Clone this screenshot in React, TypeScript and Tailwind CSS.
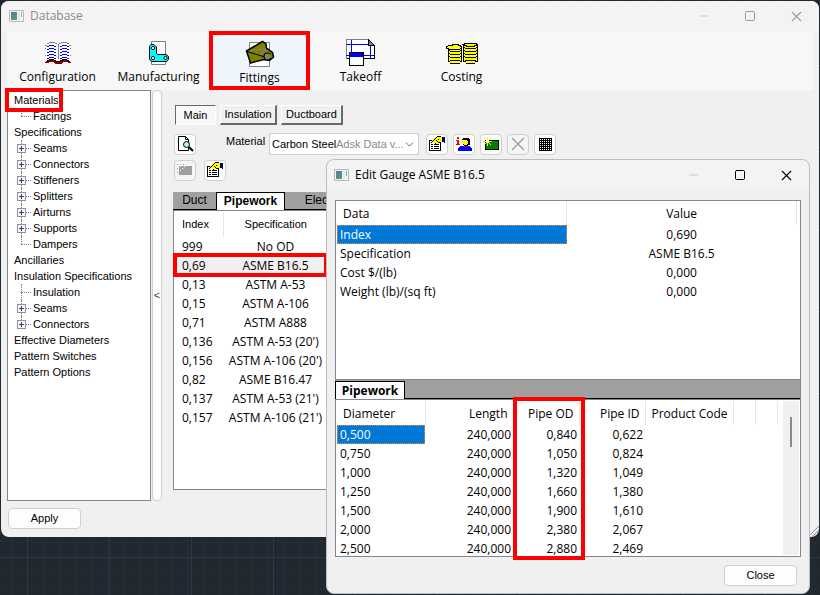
import React from 'react';
import { ChevronDown, Minus, Square, X } from 'lucide-react';

type TreeNode = {
  name: string;
  children?: { name: string; expandable?: boolean }[];
};

const tree: TreeNode[] = [
  { name: 'Materials', children: [{ name: 'Facings' }] },
  {
    name: 'Specifications',
    children: [
      { name: 'Seams', expandable: true },
      { name: 'Connectors', expandable: true },
      { name: 'Stiffeners', expandable: true },
      { name: 'Splitters', expandable: true },
      { name: 'Airturns', expandable: true },
      { name: 'Supports', expandable: true },
      { name: 'Dampers' },
    ],
  },
  { name: 'Ancillaries' },
  {
    name: 'Insulation Specifications',
    children: [
      { name: 'Insulation' },
      { name: 'Seams', expandable: true },
      { name: 'Connectors', expandable: true },
    ],
  },
  { name: 'Effective Diameters' },
  { name: 'Pattern Switches' },
  { name: 'Pattern Options' },
];

const specs = [
  ['999', 'No OD'],
  ['0,69', 'ASME B16.5'],
  ['0,13', 'ASTM A-53'],
  ['0,15', 'ASTM A-106'],
  ['0,71', 'ASTM A888'],
  ['0,136', "ASTM A-53 (20')"],
  ['0,156', "ASTM A-106 (20')"],
  ['0,82', 'ASME B16.47'],
  ['0,137', "ASTM A-53 (21')"],
  ['0,157', "ASTM A-106 (21')"],
];

const gauge = [
  ['Index', '0,690'],
  ['Specification', 'ASME B16.5'],
  ['Cost $/(lb)', '0,000'],
  ['Weight (lb)/(sq ft)', '0,000'],
];

const pipes = [
  ['0,500', '240,000', '0,840', '0,622'],
  ['0,750', '240,000', '1,050', '0,824'],
  ['1,000', '240,000', '1,320', '1,049'],
  ['1,250', '240,000', '1,660', '1,380'],
  ['1,500', '240,000', '1,900', '1,610'],
  ['2,000', '240,000', '2,380', '2,067'],
  ['2,500', '240,000', '2,880', '2,469'],
];

const BookIcon = () => (
  <svg width="26" height="24" viewBox="0 0 26 24" fill="none" shapeRendering="crispEdges" aria-hidden="true">
    <path d="M1 3h11l1 1 1-1h11v16l-8-1-4 2-4-2-8 1z" fill="#fff" />
    <path d="M13 3v15" stroke="#808080" strokeWidth="1" />
    <path d="M0 4.500h2M2 2.500h2M4 1.500h6M10 2.500h2M14 2.500h2M16 1.500h6M22 2.500h2M24 4.500h2M.500 7v1M25.500 7v1M.500 14v1M25.500 14v1" stroke="#808080" />
    {[5, 8, 11, 14, 17].map((y) => (
      <g key={y} fill="#0000ff">
        <path d={`M2 ${y}h2v1H2zM4 ${y - 1}h5v1H4zM9 ${y}h2v1H9z`} />
        <path d={`M15 ${y}h2v1h-2zM17 ${y - 1}h5v1h-5zM22 ${y}h2v1h-2z`} />
      </g>
    ))}
    <path d="M0 22v-1l3-2h6l4 2 4-2h6l3 2v1h-3l-1-1h-4l-2 2h-6l-2-2H4l-1 1z" fill="#800000" />
    <path d="M2 19.500h2M4 18.500h5M9 19.500h2M11 20.500h4M15 19.500h2M17 18.500h5M22 19.500h2" stroke="#000" />
  </svg>
);

const BracketIcon = () => (
  <svg width="22" height="26" viewBox="0 0 22 26" fill="none" aria-hidden="true">
    <path d="M3.500 1.500h14v23h-14z" fill="#fff" stroke="#808080" />
    <path d="M3 4.500h3l2.500 2.500v6.500l1.500 1h8l2.500 2v3l-2 2H4l-2.500-2V6.500z" fill="#00ffff" stroke="#000" />
    <circle cx="5" cy="8" r="1.600" fill="#fff" stroke="#000" />
    <circle cx="5" cy="18" r="1.600" fill="#fff" stroke="#000" />
    <circle cx="17.500" cy="18" r="1.600" fill="#fff" stroke="#000" />
  </svg>
);

const FittingIcon = () => (
  <svg width="30" height="28" viewBox="0 0 30 28" fill="none" aria-hidden="true">
    <path d="M4.500 2.500h20v24h-20z" fill="#fff" stroke="#808080" />
    <path d="M1.500 11L17.500 1.500l3.500 2.500 .500 4 6 4.500 1 4.500-4 3.500-5.500-1-13.500 3.500-2-6z" fill="#808000" stroke="#000" strokeWidth="1.500" />
    <path d="M4 10.500l13-1 4-1.500" stroke="#808080" />
    <path d="M15.500 14.500l5.500-5" stroke="#808080" strokeWidth="1.500" />
    <path d="M2 11.500l13 4 5 1.500" stroke="#000" />
    <circle cx="22.500" cy="16.500" r="3.500" fill="#808080" stroke="#000" strokeWidth="1.200" />
    <path d="M24 13.500l3 1.500v2.500l-2 1z" fill="#808000" />
  </svg>
);

const TakeoffIcon = () => (
  <svg width="30" height="28" viewBox="0 0 30 28" fill="none" shapeRendering="crispEdges" aria-hidden="true">
    <path d="M.500.500h22l6 6v13H.500z" fill="#fff" stroke="#808080" />
    <path d="M.500 19.500h28V6.500" stroke="#000" />
    <path d="M0 5.500h23M5.500 1v18M24.500 7v12M0 16.500h28" stroke="#0000ff" />
    <path d="M22.500.500v6h6z" fill="#808080" stroke="#000" />
    <path d="M3.500 13.500h14v13h-14z" fill="#fff" stroke="#000" />
    <path d="M4 14h13v4H4z" fill="#0000ff" />
  </svg>
);

const CoinsIcon = () => (
  <svg width="32" height="22" viewBox="0 0 32 22" fill="none" shapeRendering="crispEdges" aria-hidden="true">
    <path d="M2 6h13v13l-2 2H4l-2-2z" fill="#ffff00" />
    <path d="M17 3h14v16l-3 2h-8l-3-2z" fill="#ffff00" />
    <path d="M2.500 7v12M15.500 6v13M17.500 3v16M31.500 3v16M4 21.500h10M20 21.500h9" stroke="#000" />
    <path
      d="M2 19.500h2M14 19.500h2M17 19.500h3M29 19.500h3M4 9.500h10M4 12.500h10M4 15.500h10M4 18.500h10M19 6.500h11M19 9.500h11M19 12.500h11M19 15.500h11M19 18.500h11"
      stroke="#000"
    />
    <path d="M3 8.500h1M14 8.500h1M3 11.500h1M14 11.500h1M3 14.500h1M14 14.500h1M18 5.500h1M30 5.500h1M18 8.500h1M30 8.500h1M18 11.500h1M30 11.500h1M18 14.500h1M30 14.500h1" stroke="#000" />
    <path d="M.500 5l2-1.500h3l2-1h4l4 2v2l-3 1h-8l-4-1z" fill="#ffff00" stroke="#000" />
    <path d="M17.500 2.500l3-1.500h8l3 1.500-3 1.500h-8z" fill="#ffff00" stroke="#000" />
  </svg>
);

const AppIcon = () => (
  <svg width="15" height="12" viewBox="0 0 15 12" aria-hidden="true" className="shrink-0">
    <defs>
      <linearGradient id="app" x1="0" y1="0" x2="0.300" y2="1">
        <stop offset="0" stopColor="#4a7d9c" />
        <stop offset="1" stopColor="#5c9a72" />
      </linearGradient>
    </defs>
    <path d="M.500.500h14v11H.500z" fill="#f2f5f7" stroke="#b4b9be" />
    <path d="M2 2h6v8H2z" fill="url(#app)" />
    <path d="M9 2h2v8H9z" fill="#dfe5e8" />
    <path d="M12 2h1v5h-1z" fill="#8fb3a8" />
  </svg>
);

const PreviewIcon = () => (
  <svg width="18" height="16" viewBox="0 0 18 16" fill="none" className="shrink-0" aria-hidden="true">
    <path d="M2.500.500h7l3 3v11h-10z" fill="#fff" stroke="#000" />
    <path d="M9.500.500v3h3" stroke="#000" />
    <circle cx="10.500" cy="8.500" r="3" fill="#a8f4f4" stroke="#000" />
    <path d="M13 11l4 4" stroke="#000" strokeWidth="2" />
  </svg>
);

const PropertiesIcon = () => (
  <svg width="18" height="16" viewBox="0 0 18 16" fill="none" shapeRendering="crispEdges" className="shrink-0" aria-hidden="true">
    <path d="M1 4h12v11H1z" fill="#000" />
    <path d="M2 5h10v9H2z" fill="#fff" />
    <path d="M3 8.500h2M6 8.500h5M3 10.500h2M6 10.500h5M3 12.500h2M6 12.500h5" stroke="#000" />
    <path d="M3 5h1V4h1V3h1V2h1V1h7v5h-3v1H9v1H8V7H7V6H5v1H3z" fill="#ffff00" />
    <path d="M3 6.500h1M4 5.500h1M5 4.500h1M6 3.500h1M7 2.500h1M8 1.500h1M9 .500h4M7 7.500h1M9 5.500h1M10 6.500h2M8 4.500h1M10 3.500h1" stroke="#000" />
    <path d="M14 1h3v6h-1V6h-2z" fill="#000080" />
  </svg>
);

const PersonIcon = () => (
  <svg width="18" height="16" viewBox="0 0 18 16" fill="none" shapeRendering="crispEdges" className="shrink-0" aria-hidden="true">
    <path d="M2 1h2v2H2zM1 4h3v4h1v1H1V8h1V5H1z" fill="#ff0000" />
    <path d="M8 2h5l2 2v5h-2l-1 1H9L7 8V4z" fill="#000" />
    <path d="M7 4h5v1h1v3h-1v1H9V8H7z" fill="#ffff00" />
    <path d="M3 15v-3l3-2h3l2 1 2-1h1l3 2v3z" fill="#0000ff" />
    <path d="M9 10h3v1H9z" fill="#ff0000" />
  </svg>
);

const NewIcon = () => (
  <svg width="18" height="16" viewBox="0 0 18 16" fill="none" shapeRendering="crispEdges" className="shrink-0" aria-hidden="true">
    <path d="M3.500 4.500h13v9h-13z" fill="#008000" stroke="#000" />
    <path d="M5.500 1v9M1 5.500h9M2 2l7 7M9 2l-7 7" stroke="#ffff00" />
    <path d="M4 4h3v3H4z" fill="#fff" />
  </svg>
);

const DeleteIcon = () => (
  <svg width="18" height="16" viewBox="0 0 18 16" fill="none" className="shrink-0" aria-hidden="true">
    <path d="M4 3l11 11M16 3L4 14" stroke="#fff" />
    <path d="M3 2l12 12M15 2L3 14" stroke="#a0a0a0" strokeWidth="1.500" />
  </svg>
);

const GridIcon = () => (
  <svg width="13" height="13" viewBox="0 0 13 13" shapeRendering="crispEdges" aria-hidden="true">
    <path d="M0 0h13v13H0z" />
    <path d="M1 1.500h11M1 3.500h11M1 5.500h11M1 7.500h11M1 9.500h11M1 11.500h11" stroke="#fff" strokeDasharray="1 1" />
  </svg>
);

const DisabledIcon = () => (
  <svg width="18" height="14" viewBox="0 0 18 14" fill="none" shapeRendering="crispEdges" className="shrink-0" aria-hidden="true">
    <path d="M3 3h13v9H3z" fill="#a0a0a0" />
    <path d="M1 1h1v1H1zM4 1h1v1H4zM7 1h1v1H7zM1 5h1v1H1zM1 9h1v1H1z" fill="#a0a0a0" />
    <path d="M4 3h1v1H4zM6 5h1v1H6zM8 3h1v1H8zM4 7h1v1H4z" fill="#fff" />
  </svg>
);

const ToolButton = ({ label, disabled, children }: { label: string; disabled?: boolean; children: React.ReactNode }) => (
  <button
    type="button"
    aria-label={label}
    disabled={disabled}
    className="flex h-[21px] w-[22px] items-center justify-center rounded border border-[#d0d0d0] bg-[#fdfdfd] disabled:bg-[#f5f5f5]"
  >
    {children}
  </button>
);

const WindowControls = ({ active }: { active?: boolean }) => (
  <div className={active ? 'flex text-black' : 'flex text-[#9a9a9a]'}>
    <button type="button" aria-label="Minimize" className="flex h-7 w-[46px] items-center justify-center text-[#c4c4c4]">
      <Minus size={14} strokeWidth={1.500} />
    </button>
    <button type="button" aria-label="Maximize" className="flex h-7 w-[46px] items-center justify-center">
      <Square size={12} strokeWidth={2} />
    </button>
    <button type="button" aria-label="Close window" className="flex h-7 w-[46px] items-center justify-center">
      <X size={17} strokeWidth={1.500} />
    </button>
  </div>
);

const categories = [
  { name: 'Configuration', icon: <BookIcon /> },
  { name: 'Manufacturing', icon: <BracketIcon /> },
  { name: 'Fittings', icon: <FittingIcon />, selected: true },
  { name: 'Takeoff', icon: <TakeoffIcon /> },
  { name: 'Costing', icon: <CoinsIcon /> },
];

const CategoryBar = () => (
  <nav className="mx-1.5 flex h-[59px] bg-[#f7f7f7]">
    {categories.map((c) => (
      <button
        key={c.name}
        type="button"
        className={
          c.selected
            ? 'flex w-[101px] flex-col items-center justify-end border-4 border-[#ff0000] bg-[#eff6fb] text-xs leading-4'
            : 'flex w-[101px] flex-col items-center justify-end pb-[5px] text-xs leading-4'
        }
      >
        <span className="flex h-8 items-center">{c.icon}</span>
        {c.name}
      </button>
    ))}
  </nav>
);

const MaterialTree = () => (
  <div className="relative w-36 shrink-0 border border-[#828790] bg-white font-['Liberation_Sans'] text-[11px] leading-4">
    <ul className="pt-px">
      {tree.map((node) => (
        <li key={node.name}>
          <span className="pl-1.5">{node.name}</span>
          {node.children && (
            <ul>
              {node.children.map((child, i) => (
                <li key={child.name} className="flex h-4 items-center pl-[9px]">
                  <span className="relative flex h-4 w-4 items-center">
                    <span
                      className={
                        i === node.children!.length - 1
                          ? 'absolute left-1 top-0 h-2 border-l border-dotted border-[#808080]'
                          : 'absolute left-1 top-0 h-4 border-l border-dotted border-[#808080]'
                      }
                    />
                    <span className="absolute left-1 top-2 w-2.5 border-t border-dotted border-[#808080]" />
                    {child.expandable && (
                      <svg width="9" height="9" viewBox="0 0 9 9" fill="none" shapeRendering="crispEdges" className="relative" aria-hidden="true">
                        <path d="M.500.500h8v8h-8z" fill="#f8f8f8" stroke="#919191" />
                        <path d="M2 4.500h5M4.500 2v5" stroke="#2a3f8f" />
                      </svg>
                    )}
                  </span>
                  {child.name}
                </li>
              ))}
            </ul>
          )}
        </li>
      ))}
    </ul>
    {/* highlight around the Materials entry */}
    <div className="absolute -left-[3px] -top-[3px] h-6 w-[58px] border-4 border-[#ff0000]" />
  </div>
);

const SpecTable = () => (
  <div className="relative flex-1 border border-[#828790] bg-white p-0.5">
    <table className="w-[152px] table-fixed text-xs leading-[19px]">
      <colgroup>
        <col className="w-[47px]" />
        <col />
      </colgroup>
      <thead>
        <tr className="h-6 font-['Liberation_Sans'] text-[11px]">
          <th className="border-r border-[#e5e5e5] pl-1.5 text-left font-normal">Index</th>
          <th className="font-normal">Specification</th>
        </tr>
      </thead>
      <tbody>
        {specs.map(([index, name]) => (
          <tr key={index} className={index === '0,69' ? 'bg-[#f0f0f0]' : ''}>
            <td className="h-[19px] p-0 pl-1.5">{index}</td>
            <td className="h-[19px] whitespace-nowrap p-0 text-center">{name}</td>
          </tr>
        ))}
      </tbody>
    </table>
    {/* highlight around the chosen gauge */}
    <div className="absolute -left-px top-[42px] h-6 w-[155px] border-4 border-[#ff0000]" />
  </div>
);

const MaterialPanel = () => (
  <section className="ml-[11px] mr-5 flex flex-1 flex-col pb-[11px] pt-[15px] font-['Liberation_Sans'] text-[11px]">
    <div className="ml-0.5 flex gap-1">
      <button type="button" className="h-5 w-[41px] border-l border-t border-[#696969] border-b border-r border-b-white border-r-white bg-[#f8f8f8]">
        Main
      </button>
      <button type="button" className="h-5 w-[57px] border-b-2 border-r-2 border-l border-t border-[#696969] border-l-white border-t-white">
        Insulation
      </button>
      <button type="button" className="h-5 w-[62px] border-b-2 border-r-2 border-l border-t border-[#696969] border-l-white border-t-white">
        Ductboard
      </button>
    </div>
    <div className="ml-px mt-2 flex items-center gap-[5px]">
      <ToolButton label="Preview">
        <PreviewIcon />
      </ToolButton>
      <label htmlFor="material" className="ml-[25px] w-[38px] pb-1.5">
        Material
      </label>
      <div className="flex h-[22px] w-[150px] items-center border border-[#d0d0d0] bg-white pl-0.5">
        <input id="material" defaultValue="Carbon Steel" className="w-16 outline-none" />
        <select aria-label="Material source" className="min-w-0 flex-1 appearance-none text-[#8a8a8a] outline-none">
          <option>Adsk Data v...</option>
        </select>
        <ChevronDown size={13} strokeWidth={1.500} className="mr-0.5 shrink-0 text-[#444]" aria-hidden="true" />
      </div>
      <div className="ml-0.5 flex gap-[5px]">
        <ToolButton label="Properties">
          <PropertiesIcon />
        </ToolButton>
        <ToolButton label="Information">
          <PersonIcon />
        </ToolButton>
        <ToolButton label="New material">
          <NewIcon />
        </ToolButton>
        <ToolButton label="Delete material" disabled>
          <DeleteIcon />
        </ToolButton>
        <ToolButton label="Grid">
          <GridIcon />
        </ToolButton>
      </div>
    </div>
    <div className="ml-px mt-1 flex gap-2">
      <ToolButton label="New gauge" disabled>
        <DisabledIcon />
      </ToolButton>
      <ToolButton label="Gauge properties">
        <PropertiesIcon />
      </ToolButton>
    </div>
    <div className="mt-[11px] flex h-[18px] items-end border-b border-black bg-[#a0a0a0] text-xs">
      <button type="button" className="h-[17px] w-[43px]">
        Duct
      </button>
      <button type="button" className="-mb-px h-[18px] w-[69px] border border-b-0 border-black bg-white font-bold leading-4">
        Pipework
      </button>
      <button type="button" className="h-[17px] w-[88px]">
        Electrical
      </button>
    </div>
    <div className="flex flex-1 flex-col font-['Open_Sans']">
      <SpecTable />
    </div>
  </section>
);

const DatabaseWindow = () => (
  <div className="relative mx-px mb-[58px] mt-px flex flex-1 flex-col overflow-hidden rounded-lg bg-[#f0f0f0]">
    <header className="flex h-[30px] shrink-0 items-center justify-between bg-[#f3f3f3] pl-2">
      <div className="flex items-center gap-1.5">
        <AppIcon />
        <h1 className="text-xs text-[#8c8c8c]">Database</h1>
      </div>
      <WindowControls />
    </header>
    <CategoryBar />
    <div className="flex flex-1">
      <div className="ml-1.5 flex flex-col">
        <div className="flex flex-1 gap-px">
          <MaterialTree />
          <button
            type="button"
            aria-label="Collapse tree"
            className="w-[10px] rounded border border-[#d0d0d0] bg-[#fdfdfd] font-['Liberation_Sans'] text-[11px] text-[#444]"
          >
            &lt;
          </button>
        </div>
        <div className="px-px pb-2 pt-[7px]">
          <button type="button" className="block h-[21px] w-[73px] rounded border border-[#d0d0d0] bg-[#fdfdfd] font-['Liberation_Sans'] text-[11px]">
            Apply
          </button>
        </div>
      </div>
      <div className="flex flex-1 flex-col pb-9">
        <MaterialPanel />
      </div>
    </div>
    <svg width="12" height="12" viewBox="0 0 12 12" className="absolute bottom-0 right-0" aria-hidden="true">
      <path d="M1 12L12 1M5 12l7-7M9 12l3-3" stroke="#8a8a8a" />
    </svg>
  </div>
);

const GaugeTable = () => (
  <div className="flex-1 bg-white pb-px pl-px pr-[3px]">
    <table className="w-full table-fixed text-xs leading-[19px]">
      <colgroup>
        <col className="w-1/2" />
        <col className="w-1/2" />
      </colgroup>
      <thead>
        <tr className="h-6">
          <th className="border-r border-[#e5e5e5] pl-1.5 text-left font-normal">Data</th>
          <th className="border-r border-[#e5e5e5] font-normal">Value</th>
        </tr>
      </thead>
      <tbody>
        {gauge.map(([name, value], i) => (
          <tr key={name}>
            <td className={i === 0 ? 'bg-[#0078d7] p-0 pl-[3px] text-white outline-1 -outline-offset-1 outline-dotted outline-[#ff8728]' : 'p-0 pl-[3px]'}>
              {name}
            </td>
            <td className="p-0 text-center">{value}</td>
          </tr>
        ))}
      </tbody>
    </table>
  </div>
);

const PipeTable = () => (
  <div className="relative flex h-[157px] border-t border-[#828790] bg-white">
    <div className="flex-1 overflow-hidden p-px">
      <table className="w-full table-fixed text-xs leading-[19px]">
        <colgroup>
          <col className="w-[88px]" />
          <col className="w-[88px]" />
          <col className="w-[66px]" />
          <col className="w-[66px]" />
          <col className="w-[88px]" />
          <col className="w-[22px]" />
          <col className="w-[22px]" />
          <col />
        </colgroup>
        <thead>
          <tr className="h-6 text-right">
            <th className="border-r border-[#e5e5e5] pl-1.5 text-left font-normal">Diameter</th>
            <th className="border-r border-[#e5e5e5] pr-[5px] font-normal">Length</th>
            <th className="border-r border-[#e5e5e5] pr-[5px] font-normal">Pipe OD</th>
            <th className="border-r border-[#e5e5e5] pr-[5px] font-normal">Pipe ID</th>
            <th className="whitespace-nowrap border-r border-[#e5e5e5] pl-1.5 text-left font-normal">Product Code</th>
            <th className="border-r border-[#e5e5e5]" />
            <th className="border-r border-[#e5e5e5]" />
            <th />
          </tr>
        </thead>
        <tbody>
          {pipes.map((row, i) => (
            <tr key={row[0]}>
              <td className={i === 0 ? 'bg-[#0078d7] p-0 pl-[3px] text-white outline-1 -outline-offset-1 outline-dotted outline-[#ff8728]' : 'p-0 pl-[3px]'}>
                {row[0]}
              </td>
              <td className="p-0 pr-0.5 text-right">{row[1]}</td>
              <td className="p-0 pr-0.5 text-right">{row[2]}</td>
              <td className="p-0 pr-0.5 text-right">{row[3]}</td>
              <td colSpan={4} />
            </tr>
          ))}
        </tbody>
      </table>
    </div>
    <div className="my-px mr-px flex w-4 justify-center bg-[#f0f0f0] pt-4">
      <div className="h-[30px] w-0.5 bg-[#8a8a8a]" />
    </div>
    {/* highlight around the Pipe OD column */}
    <div className="absolute -bottom-1 -top-[3px] left-[177px] w-[72px] border-4 border-[#ff0000]" />
  </div>
);

const EditGaugeDialog = () => (
  <div role="dialog" aria-label="Edit Gauge ASME B16.5" className="absolute bottom-px left-[326px] right-2.5 top-[159px] flex flex-col rounded-lg border border-[#bcbcbc] bg-[#f0f0f0]">
    <header className="flex h-[30px] shrink-0 items-center justify-between rounded-t-lg bg-[#f3f3f3] pl-[7px]">
      <div className="flex items-center gap-1.5">
        <AppIcon />
        <h2 className="text-xs">Edit Gauge ASME B16.5</h2>
      </div>
      <WindowControls active />
    </header>
    <div className="mx-2 mt-2.5 flex flex-1 flex-col border border-[#828790]">
      <GaugeTable />
      <div className="flex h-5 items-end border-b border-t border-b-black border-t-[#828790] bg-[#a0a0a0]">
        <button type="button" className="-mb-px -ml-px h-[18px] w-[70px] border border-b-0 border-black bg-white text-xs font-bold leading-4">
          Pipework
        </button>
      </div>
      <PipeTable />
    </div>
    <div className="flex justify-end pb-[7px] pr-3 pt-2">
      <button type="button" className="h-[21px] w-[73px] rounded border border-[#d0d0d0] bg-[#fdfdfd] font-['Liberation_Sans'] text-[11px]">
        Close
      </button>
    </div>
  </div>
);

export default function App() {
  return (
    <main className="relative flex min-h-screen flex-col bg-[#212830] bg-[linear-gradient(#2f3747_1px,transparent_1px),linear-gradient(90deg,#2f3747_1px,transparent_1px),linear-gradient(#262d37_1px,transparent_1px),linear-gradient(90deg,#262d37_1px,transparent_1px)] bg-[size:82px_82px,82px_82px,16px_16px,16px_16px] bg-[position:0_65px,27px_0,0_13px,11px_0] font-['Open_Sans',sans-serif] text-black">
      <DatabaseWindow />
      <EditGaugeDialog />
    </main>
  );
}
